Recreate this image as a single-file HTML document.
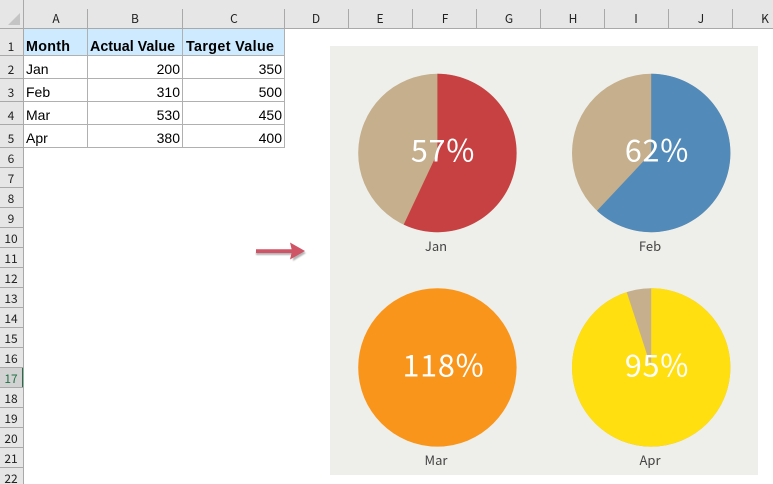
<!DOCTYPE html>
<html><head><meta charset="utf-8"><style>
html,body{margin:0;padding:0;background:#fff}
svg{display:block}
text{font-family:"Liberation Sans",Arial,sans-serif}
.h{font-family:"Noto Sans CJK JP","DejaVu Sans",sans-serif;font-size:12px;fill:#222;text-anchor:middle}
.c{font-size:14px;fill:#000}
.b{font-weight:bold;font-size:14.3px}
.e{text-anchor:end}
.p{font-family:"Noto Sans CJK JP","DejaVu Sans",sans-serif;font-size:30.5px;letter-spacing:.8px;fill:#fff;text-anchor:middle}
.l{font-family:"Noto Sans CJK JP","DejaVu Sans",sans-serif;font-size:13px;fill:#444;text-anchor:middle}
</style></head><body>
<svg width="773" height="484" viewBox="0 0 773 484" xmlns="http://www.w3.org/2000/svg">
<defs><filter id="s" x="-20%" y="-100%" width="140%" height="300%"><feGaussianBlur stdDeviation="0.9"/></filter></defs>
<rect width="773" height="484" fill="#fff"/>
<rect x="0" y="0" width="773" height="28" fill="#e6e6e6"/>
<rect x="0" y="0" width="23" height="484" fill="#e6e6e6"/>
<rect x="0" y="368" width="23" height="20" fill="#d2d2d2"/>
<rect x="22" y="368" width="2" height="20" fill="#217346"/>
<path d="M20 13V25H8Z" fill="#c4c4c4"/>
<rect x="0" y="28" width="773" height="1" fill="#a9a9a9"/>
<rect x="23" y="0" width="1" height="484" fill="#a9a9a9"/>
<g fill="#a9a9a9">
<rect x="87" y="9" width="1" height="19"/><rect x="182" y="9" width="1" height="19"/><rect x="284" y="9" width="1" height="19"/><rect x="348" y="9" width="1" height="19"/><rect x="412" y="9" width="1" height="19"/><rect x="476" y="9" width="1" height="19"/><rect x="540" y="9" width="1" height="19"/><rect x="604" y="9" width="1" height="19"/><rect x="668" y="9" width="1" height="19"/><rect x="732" y="9" width="1" height="19"/>
<rect x="0" y="55" width="23" height="1"/><rect x="0" y="78" width="23" height="1"/><rect x="0" y="101" width="23" height="1"/><rect x="0" y="124" width="23" height="1"/><rect x="0" y="147" width="23" height="1"/>
<rect x="0" y="167" width="23" height="1"/><rect x="0" y="187" width="23" height="1"/><rect x="0" y="207" width="23" height="1"/><rect x="0" y="227" width="23" height="1"/><rect x="0" y="247" width="23" height="1"/><rect x="0" y="267" width="23" height="1"/><rect x="0" y="287" width="23" height="1"/><rect x="0" y="307" width="23" height="1"/><rect x="0" y="327" width="23" height="1"/><rect x="0" y="347" width="23" height="1"/><rect x="0" y="367" width="23" height="1"/><rect x="0" y="387" width="23" height="1"/><rect x="0" y="407" width="23" height="1"/><rect x="0" y="427" width="23" height="1"/><rect x="0" y="447" width="23" height="1"/><rect x="0" y="467" width="23" height="1"/>
</g>
<g>
<text class="h" x="56" y="23">A</text><text class="h" x="135" y="23">B</text><text class="h" x="234" y="23">C</text><text class="h" x="316" y="23">D</text><text class="h" x="380" y="23">E</text><text class="h" x="445" y="23">F</text><text class="h" x="509" y="23">G</text><text class="h" x="573" y="23">H</text><text class="h" x="636" y="23">I</text><text class="h" x="701" y="23">J</text><text class="h" x="765" y="23">K</text>
<text class="h" x="11" y="51">1</text><text class="h" x="11" y="74">2</text><text class="h" x="11" y="97">3</text><text class="h" x="11" y="120">4</text><text class="h" x="11" y="143">5</text>
<text class="h" x="11" y="163">6</text><text class="h" x="11" y="183">7</text><text class="h" x="11" y="203">8</text><text class="h" x="11" y="223">9</text><text class="h" x="11" y="243">10</text><text class="h" x="11" y="263">11</text><text class="h" x="11" y="283">12</text><text class="h" x="11" y="303">13</text><text class="h" x="11" y="323">14</text><text class="h" x="11" y="343">15</text><text class="h" x="11" y="363">16</text><text class="h" x="11" y="383" style="fill:#217346">17</text><text class="h" x="11" y="403">18</text><text class="h" x="11" y="423">19</text><text class="h" x="11" y="443">20</text><text class="h" x="11" y="463">21</text><text class="h" x="11" y="483">22</text>
</g>
<rect x="24" y="29" width="261" height="26" fill="#cdeaff"/>
<g fill="#b0b0b0">
<rect x="24" y="55" width="261" height="1"/><rect x="24" y="78" width="261" height="1"/><rect x="24" y="101" width="261" height="1"/><rect x="24" y="124" width="261" height="1"/><rect x="24" y="147" width="261" height="1"/>
<rect x="87" y="29" width="1" height="119"/><rect x="182" y="29" width="1" height="119"/><rect x="284" y="29" width="1" height="119"/>
</g>
<text class="c b" x="26" y="51" textLength="44">Month</text><text class="c b" x="90" y="51">Actual Value</text><text class="c b" x="186" y="51" textLength="88">Target Value</text>
<text class="c" x="26" y="74">Jan</text><text class="c e" x="180" y="74">200</text><text class="c e" x="282" y="74">350</text>
<text class="c" x="26" y="97">Feb</text><text class="c e" x="180" y="97">310</text><text class="c e" x="282" y="97">500</text>
<text class="c" x="26" y="120">Mar</text><text class="c e" x="180" y="120">530</text><text class="c e" x="282" y="120">450</text>
<text class="c" x="26" y="143">Apr</text><text class="c e" x="180" y="143">380</text><text class="c e" x="282" y="143">400</text>
<path d="M256 252H293V255H256Z M293 246L306 253L293 261Z" fill="#777" opacity=".55" filter="url(#s)"/>
<path d="M256 249.3H293V253H256Z" fill="#cf5465"/>
<path d="M290 242.5L305 251L290 259.5L292 251Z" fill="#cf5465"/>
<rect x="330" y="46" width="428" height="429" fill="#eeefea"/>
<circle cx="437.4" cy="153" r="79.2" fill="#c5af8c"/>
<path d="M437.4 153V73.8A79.2 79.2 0 1 1 403.68 224.66Z" fill="#c84142"/>
<circle cx="651.2" cy="153" r="79.2" fill="#c5af8c"/>
<path d="M651.2 153V73.8A79.2 79.2 0 1 1 597 210.74Z" fill="#528ab9"/>
<circle cx="437.4" cy="367.4" r="79.2" fill="#f9951a"/>
<circle cx="651.2" cy="367.4" r="79.2" fill="#c5af8c"/>
<path d="M651.2 367.4V288.2A79.2 79.2 0 1 1 626.72 292.08Z" fill="#ffdf0f"/>
<text class="p" x="443" y="161.5">57%</text>
<text class="p" x="657" y="161.5">62%</text>
<text class="p" x="443.5" y="376.5">118%</text>
<text class="p" x="657" y="376.5">95%</text>
<text class="l" x="436" y="251">Jan</text>
<text class="l" x="650" y="251">Feb</text>
<text class="l" x="436" y="465">Mar</text>
<text class="l" x="650" y="465">Apr</text>
</svg>
</body></html>
